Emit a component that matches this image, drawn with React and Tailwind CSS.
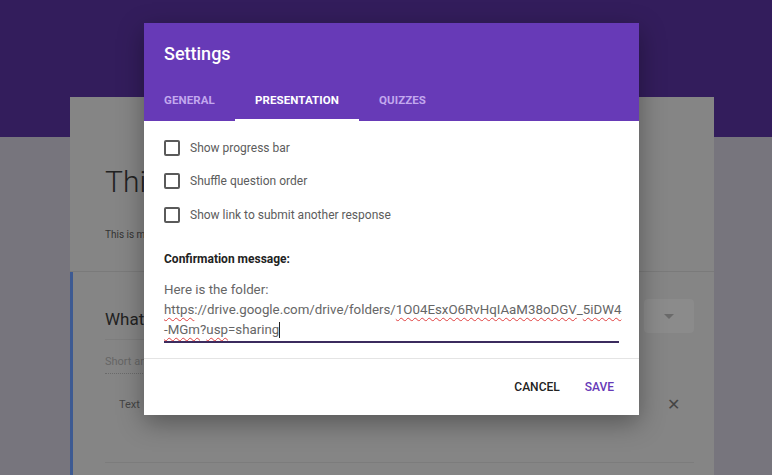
import React from 'react'

const font = { fontFamily: 'Roboto, "Liberation Sans", sans-serif' }

function Check({ label }) {
  return (
    <div className="flex items-center h-[33.5px]">
      <div className="w-[16px] h-[16px] rounded-[2px] border-2 border-[#5a5a5a]"></div>
      <span className="ml-[10px] text-[12px] text-[#5c5c5c]">{label}</span>
    </div>
  )
}

const squiggle = 'underline decoration-wavy decoration-[#e04040] decoration-1 underline-offset-[3px]'

export default function App() {
  return (
    <div className="relative h-[475px] w-[772px] overflow-hidden bg-[#77757d]" style={font}>
      {/* page behind the scrim */}
      <div className="h-[137px] bg-[#331d5c]"></div>
      <div className="ml-[70px] w-[644px] -mt-[40px]">
        <div className="h-[175px] bg-[#858585] border-b border-[#7a7a7a] pl-[35px] pt-[70px]">
          <div className="text-[30px] font-light text-[#222] leading-[30px]">This is my form</div>
          <div className="mt-[30px] text-[10px] text-[#333]">This is my form description</div>
        </div>
        <div className="h-[210px] bg-[#858585] border-l-[3px] border-[#3d5a92] pl-[32px] pr-[20px] pt-[35px]">
          <div className="flex items-start">
            <div className="flex-1">
              <div className="text-[17px] text-[#222] pb-[6px] border-b border-[#7d7d7d] w-[300px]">What is the folder?</div>
              <div className="mt-[14px] text-[11px] text-[#666] pb-[3px] border-b border-dotted border-[#6a6a6a] w-[140px]">Short answer text</div>
            </div>
            <div className="w-[50px] h-[34px] bg-[#8b8b8b] rounded-sm flex items-center justify-center -mt-[8px]">
              <div className="w-0 h-0 border-l-[5px] border-r-[5px] border-t-[5px] border-l-transparent border-r-transparent border-t-[#6a6a6a]"></div>
            </div>
          </div>
          <div className="flex items-center mt-[19px] pl-[14px]">
            <span className="text-[11px] text-[#444]">Text</span>
            <div className="flex-1"></div>
            <span className="text-[16px] text-[#444] mr-[14px]">✕</span>
          </div>
          <div className="mt-[45px] border-t border-[#7c7c7c]"></div>
        </div>
      </div>

      {/* dialog */}
      <div className="absolute left-[144px] top-[23px] w-[495px] h-[392px] bg-white shadow-[0_8px_24px_rgba(0,0,0,0.35)] flex flex-col">
        <div className="bg-[#673ab7] h-[98px] flex flex-col">
          <div className="h-[58px] flex items-center pl-5 pt-[2px] text-[18px] font-medium text-white">Settings</div>
          <div className="flex h-[40px] text-[11.5px] font-bold tracking-[0.1px]">
            <div className="px-5 flex items-center text-[#c2a8ee]">GENERAL</div>
            <div className="px-5 flex items-center text-white border-b-2 border-white pt-[2px]">PRESENTATION</div>
            <div className="px-5 flex items-center text-[#c2a8ee]">QUIZZES</div>
          </div>
        </div>
        <div className="px-5 pt-[10px]">
          <div>
            <Check label="Show progress bar" />
            <Check label="Shuffle question order" />
            <Check label="Show link to submit another response" />
          </div>
          <div className="mt-[18px] text-[12px] font-bold text-[#222]">Confirmation message:</div>
          <div className="mt-[12px] text-[13.3px] leading-[20px] text-[#666] pb-[1px] border-b-2 border-[#3b2b5e]">
            <div>Here is the folder:</div>
            <div className="whitespace-nowrap">
              <span className={squiggle}>https</span>://drive.google.com/drive/folders/<span className={squiggle}>1O04EsxO6RvHqIAaM38oDGV</span>_<span className={squiggle}>5iDW4</span>
            </div>
            <div className="flex items-center">
              <span className={squiggle}>-MGm</span>?<span className={squiggle}>usp</span>=sharing<span className="inline-block w-px h-[16px] bg-[#222]"></span>
            </div>
          </div>
        </div>
        <div className="mt-[15px] border-t border-[#e4e4e4]"></div>
        <div className="flex-1 flex items-center justify-end pr-[25px] pt-[1px] gap-[25px] text-[12px] font-medium">
          <span className="text-[#222]">CANCEL</span>
          <span className="text-[#673ab7]">SAVE</span>
        </div>
      </div>
    </div>
  )
}
